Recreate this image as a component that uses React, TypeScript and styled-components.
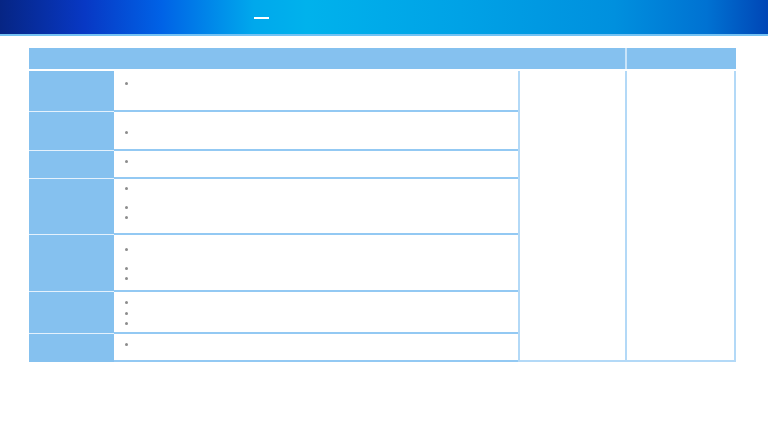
import React from "react";
import styled, { createGlobalStyle } from "styled-components";

const GlobalStyle = createGlobalStyle`
  * { box-sizing: border-box; }
  html, body {
    margin: 0;
    padding: 0;
    background: #ffffff;
    font-family: "Liberation Sans", Arial, sans-serif;
  }
`;

type Row = { height: number; dots: number[] };

// top offsets of each bullet inside its row
const rows: Row[] = [
  { height: 41, dots: [12] },
  { height: 39, dots: [20] },
  { height: 28, dots: [10] },
  { height: 56, dots: [9, 28, 38] },
  { height: 57, dots: [14, 33, 43] },
  { height: 42, dots: [10, 21, 31] },
  { height: 28, dots: [10] },
];

const App: React.FC = () => {
  const body = rows.length;
  return (
    <>
      <GlobalStyle />
      <Page>
        <Banner>
          <Dash />
        </Banner>
        <Content>
          <Grid $rows={rows.map((r) => r.height)}>
            <HeadCell $span="1 / 4">&nbsp;</HeadCell>
            <HeadCell $span="4 / 5" $last>
              &nbsp;
            </HeadCell>
            {rows.map((r, i) => (
              <React.Fragment key={i}>
                <LabelCell $row={i + 2} $last={i === body - 1} />
                <TextCell $row={i + 2}>
                  <Bullets>
                    {r.dots.map((d, j) => (
                      <Item key={j} $gap={j === 0 ? d - 5 : d - r.dots[j - 1] - 10} />
                    ))}
                  </Bullets>
                </TextCell>
              </React.Fragment>
            ))}
            <SideCell $col={3} $rows={body} />
            <SideCell $col={4} $rows={body} $edge />
          </Grid>
        </Content>
      </Page>
    </>
  );
};

export default App;

const Page = styled.div`
  width: 768px;
  height: 433px;
  background: #ffffff;
`;

const Banner = styled.header`
  height: 36px;
  display: flex;
  align-items: flex-start;
  padding: 17px 0 0 254px;
  background: linear-gradient(
    90deg,
    #062584 0%,
    #0838c4 11%,
    #0062e6 21%,
    #00a8ec 33%,
    #00b2ec 40%,
    #00a2e6 60%,
    #0090de 80%,
    #0072d2 92%,
    #0046b6 100%
  );
  border-bottom: 2px solid #74c2f3;
`;

const Dash = styled.span`
  width: 15px;
  height: 2px;
  background: #ffffff;
`;

const Content = styled.main`
  padding: 12px 0 0 29px;
`;

const Grid = styled.div<{ $rows: number[] }>`
  display: grid;
  width: 707px;
  grid-template-columns: 85px 405px 108px 109px;
  grid-template-rows: 23px ${(p) => p.$rows.map((h) => `${h}px`).join(" ")};
`;

const HeadCell = styled.div<{ $span: string; $last?: boolean }>`
  grid-column: ${(p) => p.$span};
  grid-row: 1;
  background: #85c1ef;
  border-right: ${(p) => (p.$last ? "none" : "2px solid #c9e4f9")};
  height: 21px;
  align-self: start;
`;

const LabelCell = styled.div<{ $row: number; $last?: boolean }>`
  grid-column: 1;
  grid-row: ${(p) => p.$row};
  background: #85c1ef;
  border-bottom: ${(p) => (p.$last ? "none" : "1px solid #e4f1fc")};
`;

const TextCell = styled.div<{ $row: number }>`
  grid-column: 2;
  grid-row: ${(p) => p.$row};
  border-bottom: 2px solid #93c9f3;
`;

const SideCell = styled.div<{ $col: number; $rows: number; $edge?: boolean }>`
  grid-column: ${(p) => p.$col};
  grid-row: 2 / ${(p) => p.$rows + 2};
  border-left: ${(p) => (p.$edge ? "none" : "2px solid #b3d9f7")};
  border-right: 2px solid #b3d9f7;
  border-bottom: 2px solid #b3d9f7;
  margin-left: ${(p) => (p.$edge ? "0" : "-1px")};
`;

const Bullets = styled.ul`
  list-style: none;
  margin: 0;
  padding: 0 0 0 11px;
`;

const Item = styled.li<{ $gap: number }>`
  position: relative;
  height: 10px;
  margin-top: ${(p) => p.$gap}px;
  font-size: 9px;
  line-height: 10px;
  color: #ffffff;

  &::before {
    content: "";
    position: absolute;
    left: 0;
    top: 4px;
    width: 3px;
    height: 3px;
    border-radius: 50%;
    background: #8c8c8c;
  }
`;
